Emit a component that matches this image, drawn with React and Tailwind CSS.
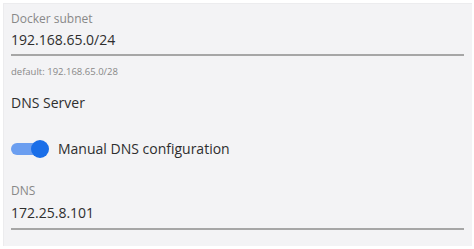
export default function App() {
  return (
    <div className="w-[474px] h-[249px] bg-white p-[3px] pr-[2px]" style={{ fontFamily: '"Open Sans", "Noto Sans", sans-serif' }}>
      <div className="h-full bg-[#f3f3f5] border-l border-t border-[#ececee] pl-[7px] pr-[8px] pt-[7px]">
        <div className="w-[453px]">
          <div className="text-[12px] leading-[16px] text-[#888888]">Docker subnet</div>
          <div className="mt-[3px] text-[14px] leading-[20px] text-[#2e2e2e]">192.168.65.0/24</div>
          <div className="mt-[4px] h-[2px] bg-[#a6a6a6]" />
          <div className="mt-[9px] text-[9.5px] leading-[14px] text-[#888888]">default: 192.168.65.0/28</div>
        </div>
        <div className="mt-[14px] text-[14px] leading-[20px] text-[#2e2e2e]">DNS Server</div>
        <div className="mt-[26px] flex items-center gap-[9px]">
          <div className="relative w-[38px] h-[20px] flex items-center">
            <div className="w-[30px] h-[12px] rounded-full bg-[#6b9ef0]" />
            <div className="absolute right-0 top-[1px] w-[18px] h-[18px] rounded-full bg-[#1a6ee8]" />
          </div>
          <div className="text-[14px] leading-[20px] text-[#2e2e2e]">Manual DNS configuration</div>
        </div>
        <div className="w-[453px]">
          <div className="mt-[25px] text-[12px] leading-[14px] text-[#888888]">DNS</div>
          <div className="mt-[5px] text-[14px] leading-[20px] text-[#2e2e2e]">172.25.8.101</div>
          <div className="mt-[5px] h-[2px] bg-[#a6a6a6]" />
        </div>
      </div>
    </div>
  )
}
